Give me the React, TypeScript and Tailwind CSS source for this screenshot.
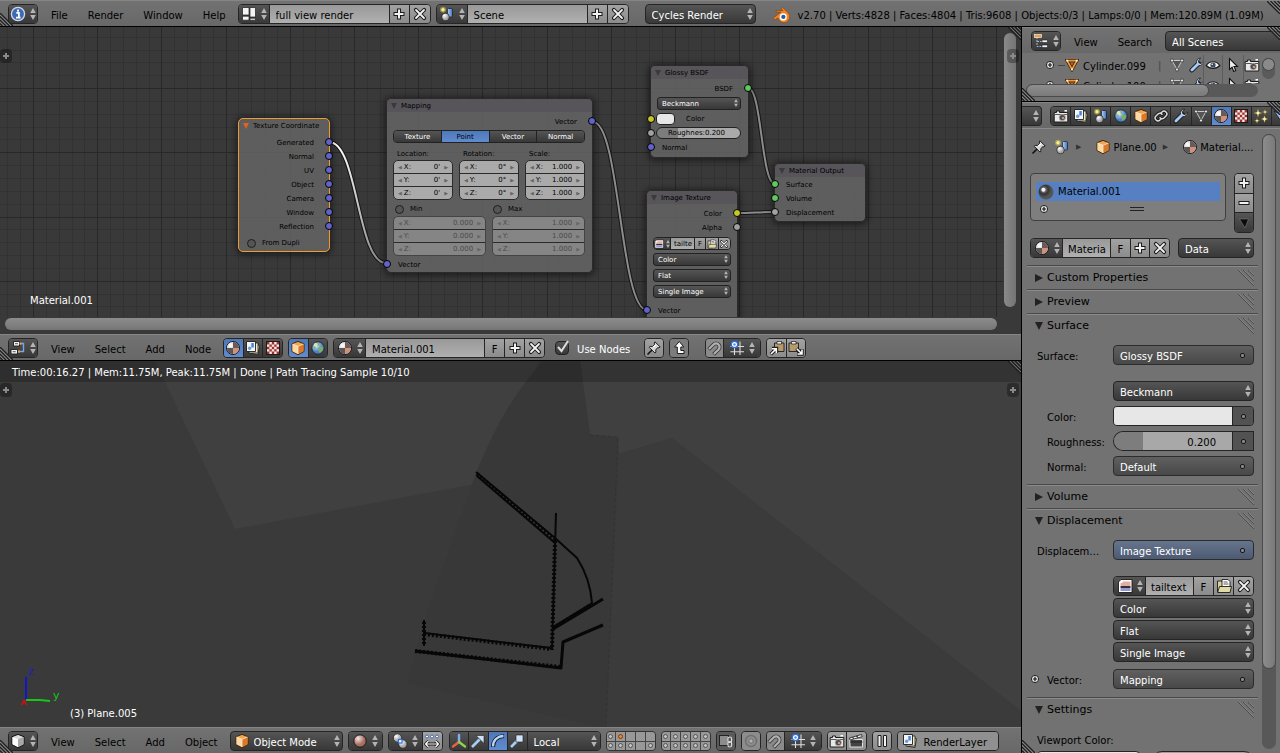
import type { ReactNode } from "react";
import clsx from "clsx";

const OUT = "#1c1c1c";

const icons: Record<string, ReactNode> = {
  info: (
    <>
      <circle cx="8" cy="8" r="6.6" fill="#3f6bb5" stroke="#cfd8e8" strokeWidth="1.3" />
      <path d="M6.3 6.8h2.6v4.6M6 11.6h4.6" stroke="#fff" strokeWidth="1.8" fill="none" />
      <rect x="7" y="3.6" width="2" height="2" fill="#fff" />
    </>
  ),
  layout: (
    <path d="M1.500 1.500h6.500v7.500h-6.500zM9 1.500h5.500v9.500H9zM1.500 10.200h6.500v4h-6.500zM9 12.200h5.500v2H9z" fill="#f4f4f4" stroke={OUT} strokeWidth=".7" />
  ),
  scene: (
    <>
      <rect x="8.500" y="2.500" width="5" height="8.500" rx="1" fill="url(#blue)" stroke={OUT} strokeWidth=".7" />
      <circle cx="4" cy="3.800" r="3" fill="#e8e04a" opacity=".45" />
      <circle cx="4" cy="3.800" r="1.700" fill="#f6f08a" />
      <circle cx="6.500" cy="11" r="3.800" fill="url(#ball)" stroke={OUT} strokeWidth=".7" />
    </>
  ),
  blender: (
    <>
      <path d="M1 10.800 8 5.400H3.600V4h6L8.300 2.400l1.300-1 5 4.800a5.300 5.300 0 1 1-9.300 4.400L2.500 12.300z" fill="#ee8324" stroke="#8a4310" strokeWidth=".6" />
      <circle cx="10" cy="9.700" r="3.200" fill="#fff" />
      <circle cx="10.100" cy="9.700" r="1.900" fill="#285a9c" />
    </>
  ),
  outliner: (
    <>
      <path d="M4 4v9.500h5M4 8.500h5" stroke="#9db8dc" fill="none" strokeDasharray="2 1" />
      <rect x="1.500" y="1.500" width="7" height="3" fill="#f0a040" stroke="#fff" strokeWidth=".6" />
      <path d="M9 7h5.500v2.600H9zM9 12h5.500v2.600H9z" fill="#f4f4f4" stroke={OUT} strokeWidth=".6" />
    </>
  ),
  plus: (
    <>
      <path d="M8 2.500v11M2.500 8h11" stroke={OUT} strokeWidth="4" />
      <path d="M8 3.500v9M3.500 8h9" stroke="#f2f2f2" strokeWidth="2" />
    </>
  ),
  minus: (
    <>
      <path d="M2.500 8h11" stroke={OUT} strokeWidth="4" />
      <path d="M3.500 8h9" stroke="#f2f2f2" strokeWidth="2" />
    </>
  ),
  cross: (
    <>
      <path d="m3.800 3.800 8.400 8.400M12.200 3.800l-8.400 8.400" stroke={OUT} strokeWidth="3.800" strokeLinecap="round" />
      <path d="m4 4 8 8M12 4l-8 8" stroke="#f2f2f2" strokeWidth="1.800" strokeLinecap="round" />
    </>
  ),
  down: <path d="M3.500 4h9L9 13z" fill="#0c0c0c" stroke="#888" strokeWidth=".5" />,
  expand: (
    <>
      <circle cx="8" cy="8" r="3.600" fill="#eee" stroke="#222" strokeWidth="1" />
      <path d="M8 5.800v4.400M5.800 8h4.400" stroke="#111" strokeWidth="1.200" />
    </>
  ),
  mesh: (
    <>
      <path d="M2.500 3h11L8 13z" fill="none" stroke="#3a2000" strokeWidth="3.600" />
      <path d="M2.500 3h11L8 13z" fill="none" stroke="#f59a3c" strokeWidth="2" />
      <path d="M1.500 2h2v2h-2zM12.500 2h2v2h-2zM7 12h2v2H7z" fill="#fff3d8" />
    </>
  ),
  meshdata: (
    <>
      <path d="M3 3.500h10L8 12.500z" fill="#555" stroke="#c8c8c8" strokeWidth="1" />
      <path d="M1.700 2.200h2.600v2.600H1.700zM11.700 2.200h2.600v2.600h-2.600zM6.700 11.200h2.600v2.600H6.700z" fill="#fff" stroke={OUT} strokeWidth=".6" />
    </>
  ),
  wrench: (
    <>
      <path d="M2.800 13.200 9.500 6.500" stroke={OUT} strokeWidth="4.600" strokeLinecap="round" />
      <path d="M14.600 4.300 12 6.600l-2.300-.7-.4-2.300L11.600 1a4.200 4.200 0 0 0-4 5.500l2 2a4.300 4.300 0 0 0 5-4.200z" fill="#c9defa" stroke={OUT} strokeWidth=".8" />
      <path d="M2.900 13.100 9 7" stroke="#a9ccf6" strokeWidth="2.800" strokeLinecap="round" />
    </>
  ),
  eye: (
    <>
      <path d="M1.200 8.500C4.500 3.500 11.500 3.500 14.800 8.500 11.500 12.200 4.500 12.200 1.200 8.500z" fill="#f1f1f1" stroke={OUT} strokeWidth="1.200" />
      <circle cx="8" cy="8" r="2.600" fill="#3c4c60" />
      <circle cx="7.200" cy="7.200" r=".8" fill="#fff" />
    </>
  ),
  cursor: <path d="M4.500 1.500v11l2.600-2.300 1.600 4.200 2-.9-1.700-4H12.500z" fill="#eee" stroke="#111" strokeWidth="1.100" />,
  camera: (
    <>
      <path d="M1.200 4.500h2.300V3h3v1.500h8.300V14H1.200z" fill="#e9e9e9" stroke={OUT} strokeWidth="1" />
      <path d="M2 6.500h12" stroke="#555" />
      <circle cx="9.300" cy="9.600" r="3.200" fill="#4b4b4b" stroke="#bbb" strokeWidth=".8" />
      <circle cx="10" cy="10" r="1.300" fill="#d88a78" />
      <rect x="11.500" y="2" width="2.500" height="1.600" fill="#fff" />
    </>
  ),
  layers: (
    <>
      <path d="m6 4 8.500 1.500L13 14.500l-8.500-1.500z" fill="#e6deb8" stroke={OUT} strokeWidth=".8" />
      <path d="M4 3h9v10H4z" fill="#efe8c6" stroke={OUT} strokeWidth=".8" />
      <path d="M1.500 1.500h9v10h-9z" fill="#f6f6f6" stroke={OUT} strokeWidth=".9" />
      <path d="M6.300 3h2.500v4.500H6.300z" fill="#4a86d8" />
      <circle cx="4.700" cy="8.300" r="1.700" fill="#6a9be0" />
    </>
  ),
  world: (
    <>
      <circle cx="8" cy="8" r="6.200" fill="url(#globe)" stroke={OUT} strokeWidth=".8" />
      <path d="M3 5.500 6.500 3l3 .8-1 2-2.500.8L5 9zM9.500 6.500l3.800.7-.8 3.600-3 2-1.500-3.300z" fill="#7fae62" />
      <circle cx="5.800" cy="5" r="2" fill="#fff" opacity=".65" />
    </>
  ),
  cube: (
    <>
      <path d="m8 1.400 6 2.300v7.800L8 14.700l-6-3.200V3.700z" fill="#f0a54e" stroke="#43270a" strokeWidth="1" />
      <path d="M2.500 4 8 6.300v7.800l-5.500-2.900z" fill="#fbd9a4" />
      <path d="M13.500 4 8 6.300v7.800l5.500-2.900z" fill="#d9792a" />
      <path d="M2.500 4 8 6.300 13.500 4M8 6.300V14" stroke="#fff0d8" strokeWidth=".7" fill="none" />
    </>
  ),
  viewcube: (
    <>
      <path d="m8 1.400 6 2.300v7.800L8 14.700l-6-3.200V3.700z" fill="#ddd" stroke="#111" strokeWidth="1" />
      <path d="M2.500 4 8 6.300v7.800l-5.500-2.900z" fill="#fff" />
      <path d="M13.500 4 8 6.300v7.800l5.500-2.900z" fill="#a8a8a8" />
    </>
  ),
  chain: (
    <g fill="none" strokeLinecap="round">
      <path d="M7 9.800a2.800 2.800 0 0 0 4 .2l2-2a2.800 2.800 0 0 0-4-4l-1 1M9 6.200A2.800 2.800 0 0 0 5 6L3 8a2.800 2.800 0 0 0 4 4l1-1" stroke={OUT} strokeWidth="3.400" />
      <path d="M7 9.800a2.800 2.800 0 0 0 4 .2l2-2a2.800 2.800 0 0 0-4-4l-1 1M9 6.200A2.800 2.800 0 0 0 5 6L3 8a2.800 2.800 0 0 0 4 4l1-1" stroke="#ddd" strokeWidth="1.500" />
    </g>
  ),
  material: (
    <>
      <circle cx="8" cy="8" r="6.500" fill="#b9b9b9" stroke="#191919" strokeWidth="1" />
      <path d="M8 8V2a6 6 0 0 1 6 6z" fill="#6a5a5a" />
      <path d="M8 8H2a6 6 0 0 1 6-6z" fill="#e0e0e0" />
      <path d="M8 8h6a6 6 0 0 1-6 6z" fill="#cf907c" />
      <path d="M8 8v6a6 6 0 0 1-6-6z" fill="#5e5555" />
      <circle cx="5.600" cy="5.400" r="2.200" fill="#fff" opacity=".7" />
    </>
  ),
  darkball: (
    <>
      <circle cx="8" cy="8" r="7.500" fill="url(#dark)" />
      <circle cx="5.400" cy="5.700" r="2" fill="#fff" opacity=".9" />
    </>
  ),
  solid: <circle cx="8" cy="8" r="6.200" fill="url(#rose)" stroke="#191919" strokeWidth="1" />,
  texture: (
    <>
      <rect x="1.500" y="1.500" width="13" height="13" fill="#f6ecec" stroke={OUT} strokeWidth="1" />
      <path d="M2 2h2.400v2.400H2zM6.800 2h2.400v2.400H6.800zM11.600 2H14v2.400h-2.400zM4.400 4.400h2.400v2.400H4.400zM9.200 4.400h2.400v2.400H9.200zM2 6.800h2.400v2.400H2zM6.800 6.800h2.400v2.400H6.800zM11.600 6.800H14v2.400h-2.400zM4.400 9.200h2.400v2.400H4.400zM9.200 9.200h2.400v2.400H9.200zM2 11.600h2.400V14H2zM6.800 11.600h2.400V14H6.800zM11.600 11.600H14V14h-2.400z" fill="#a0302a" />
    </>
  ),
  particles: (
    <path d="M5 .5 6 4l3.500 1L6 6 5 9.500 4 6 .5 5 4 4zM12 1l.7 2.300L15 4l-2.300.7L12 7l-.7-2.300L9 4l2.300-.7zM11.500 7.500l1 2.500 2.500 1-2.500 1-1 2.800-1-2.800-2.500-1 2.500-1zM4 10l.7 2 2 .7-2 .7-.7 2-.7-2-2-.7 2-.7z" fill="#fff3b0" stroke="#5a4a10" strokeWidth=".4" />
  ),
  physics: <path d="M1 3c4 3 8 2 13 1l-6 9z" fill="#9cc0f0" stroke={OUT} strokeWidth=".8" />,
  pin: (
    <>
      <path d="m1.500 14.500 4.800-4.800" stroke="#111" strokeWidth="1.600" />
      <path d="m9 1.800 5.200 5.200-1.500.8-1-.2-2 2.400.3 2.200-1 .9-5.800-5.800.9-1 2.300.3L8.700 4.400l-.4-1.300z" fill="#d6d6d6" stroke={OUT} strokeWidth="1" />
      <path d="m7.200 7.300 3-2.700" stroke="#fff" strokeWidth="1.200" />
    </>
  ),
  image: (
    <>
      <path d="M4 1.500h11v13H1.500V4z" fill="#fff" stroke={OUT} strokeWidth=".9" />
      <path d="M3.500 5h2V3.500h8V8h-10z" fill="#e2aea4" />
      <path d="M3.500 8h10v2h-10z" fill="#3a2a3a" />
      <path d="M3.500 10h10v3h-10z" fill="#9298d0" />
    </>
  ),
  folder: (
    <>
      <path d="M1.500 3h4l1 1.500h2V14h-7z" fill="#d8cf98" stroke={OUT} strokeWidth=".9" />
      <path d="M6 1.500h6l2 2V10H6z" fill="#fff" stroke={OUT} strokeWidth=".9" />
      <path d="M7.500 4h4M7.500 6h5" stroke="#444" strokeWidth=".9" />
      <path d="M3.500 8.500h12l-1.500 6H1.700z" fill="#e2daa6" stroke={OUT} strokeWidth=".9" />
    </>
  ),
  nodes: (
    <>
      <path d="M9 3.500h4.500v8H8" stroke="#79a6e8" strokeWidth="1.400" fill="none" />
      <path d="M3.500 1.500h6v4.500h-6zM1 9.500h6.500V14H1z" fill="#f2f2f2" stroke={OUT} strokeWidth=".9" />
      <path d="M5 3.700h3M2.700 11.700h3" stroke="#555" />
      <rect x="9.500" y="2.600" width="2" height="2" fill="#f0a030" />
      <rect x="8" y="10.600" width="2" height="2" fill="#f0a030" />
    </>
  ),
  up: <path d="M8.300 1.500 3.500 7h2.800v6.500H13v-3H9.800V7h3z" fill="#fff" stroke={OUT} strokeWidth="1" />,
  magnet: (
    <g fill="none" transform="rotate(45 8 8)">
      <path d="M4.500 13.500V6.500a3.500 3.500 0 0 1 7 0v7" stroke="#3a3a3a" strokeWidth="3.800" />
      <path d="M4.500 13V6.500a3.500 3.500 0 0 1 7 0V13" stroke="#b0b0b0" strokeWidth="2.200" />
    </g>
  ),
  snap: (
    <>
      <path d="M5.500 5v10M11 1.500V15M1.500 6.500H15M1.500 11.800H15" stroke="#ddd" strokeWidth="1.100" />
      <circle cx="5.500" cy="4.500" r="3.200" fill="#fff" stroke="#2f6fe0" strokeWidth="1.300" />
      <circle cx="5.500" cy="4.500" r="1.200" fill="#4a8cf8" />
    </>
  ),
  copy: (
    <>
      <path d="M5.500 3H15v8.500H5.500z" fill="#b59a6e" stroke={OUT} strokeWidth=".9" />
      <path d="M8 1.500h4.500V4H8z" fill="#eee" stroke={OUT} strokeWidth=".7" />
      <path d="m1.800 14.200 4.500-4.500M3 8.500h4.500V13" stroke={OUT} strokeWidth="3.400" fill="none" />
      <path d="m2 14 4.500-4.500M3 8.700h4.300V13" stroke="#fff" strokeWidth="1.600" fill="none" />
    </>
  ),
  paste: (
    <>
      <path d="M1 3h9.500v8.500H1z" fill="#b59a6e" stroke={OUT} strokeWidth=".9" />
      <path d="M3.500 1.500H8V4H3.500z" fill="#eee" stroke={OUT} strokeWidth=".7" />
      <path d="m8.500 8.500 5 5M14 9v5H9" stroke={OUT} strokeWidth="3.400" fill="none" />
      <path d="m8.800 8.800 5 5M14 9.500V14H9.500" stroke="#fff" strokeWidth="1.600" fill="none" />
    </>
  ),
  pivot: (
    <>
      <circle cx="5.500" cy="5" r="4.200" fill="url(#ball)" stroke={OUT} strokeWidth=".7" />
      <circle cx="10.800" cy="11" r="4.200" fill="url(#ball)" stroke={OUT} strokeWidth=".7" />
      <rect x="6.500" y="6.500" width="3.500" height="3.500" fill="#fff" stroke="#2f6fe0" strokeWidth="1.200" />
    </>
  ),
  spread: (
    <>
      <g fill="#fff" stroke="#3a66b0" strokeWidth="1">
        <circle cx="3" cy="3.500" r="1.500" />
        <circle cx="8" cy="3.500" r="1.500" />
        <circle cx="13" cy="3.500" r="1.500" />
      </g>
      <path d="M2 11h12M4.500 8 1.500 11l3 3M11.500 8l3 3-3 3" stroke={OUT} strokeWidth="3" fill="none" />
      <path d="M2 11h12M4.500 8 1.500 11l3 3M11.500 8l3 3-3 3" stroke="#fff" strokeWidth="1.200" fill="none" />
    </>
  ),
  axes: (
    <g strokeWidth="2.400" strokeLinecap="round">
      <path d="M8 9V2" stroke="#7fb0f4" />
      <path d="m8 9-6 4.500" stroke="#e8604a" />
      <path d="m8 9 6 4.500" stroke="#8cd44c" />
    </g>
  ),
  translate: (
    <>
      <path d="m2 14 8-8" stroke="#a8ccf6" strokeWidth="2.600" />
      <path d="M6 2.500h8v8z" fill="#cfe2fb" stroke={OUT} strokeWidth=".6" />
    </>
  ),
  rotate: (
    <>
      <path d="M3 14C3 7.500 7 3.500 14 3" stroke={OUT} strokeWidth="4.200" fill="none" />
      <path d="M3 13.500C3 7.500 7 3.500 13.500 3" stroke="#b6d4f8" strokeWidth="2.400" fill="none" />
    </>
  ),
  scale: (
    <>
      <path d="m2 14 7-7" stroke="#a8ccf6" strokeWidth="2.600" />
      <path d="M7 2h7v7H7z" fill="#cfe2fb" stroke={OUT} strokeWidth=".6" />
    </>
  ),
  lock: (
    <>
      <rect x="1.500" y="2.500" width="9" height="10" fill="#8c8c8c" stroke="#222" />
      <rect x="10" y="4" width="3.600" height="5.500" rx="1.800" fill="none" stroke="#ddd" strokeWidth="1.200" />
      <rect x="10" y="8.500" width="3.600" height="5.500" rx="1.800" fill="none" stroke="#ddd" strokeWidth="1.200" />
    </>
  ),
  ring: (
    <>
      <circle cx="8" cy="8" r="5.500" fill="none" stroke="#6e6e6e" strokeWidth="1.400" />
      <circle cx="8" cy="8" r="2.200" fill="#b4b4b4" stroke="#6e6e6e" strokeWidth="1" />
    </>
  ),
  clapper: (
    <>
      <path d="M2 6.500h12.500V14H2z" fill="#444" stroke="#eee" strokeWidth=".9" />
      <path d="m1.500 5 12-3.500.7 2.200L2.200 7z" fill="#eee" stroke={OUT} strokeWidth=".8" />
      <path d="m4.500 4.300 1.300 1.400M8.500 3l1.300 1.400M2 9h12.500" stroke="#222" strokeWidth="1.200" />
    </>
  ),
  pause: <path d="M4 2.500h3v11H4zM9.500 2.500h3v11h-3z" fill="#f2f2f2" stroke={OUT} strokeWidth="1" />,
};

function Icon({ name, className = "size-4" }: { name: string; className?: string }) {
  return (
    <svg viewBox="0 0 16 16" className={clsx("shrink-0", className)} aria-hidden="true">
      {icons[name]}
    </svg>
  );
}

function Arrows({ className = "h-3 w-1.5" }: { className?: string }) {
  return (
    <svg viewBox="0 0 6 12" className={clsx("shrink-0", className)} aria-hidden="true">
      <path d="M3 0l2.800 5H.2zM3 12l2.800-5H.2z" fill="#b4b4b4" />
    </svg>
  );
}

// Diagonal grip drawn in the corners of every editor area
function Grip({ className }: { className: string }) {
  return (
    <svg viewBox="0 0 13 13" className={clsx("pointer-events-none absolute size-[13px]", className)} aria-hidden="true">
      <path d="M0 0l13 13M3.500 0l9.500 9.500M7 0l6 6M10.500 0l2.500 2.500" stroke="#202020" strokeWidth="1.300" />
      <path d="M1.800 0l11.200 11.200M5.300 0l7.700 7.700M8.800 0l4.200 4.200" stroke="#8e8e8e" strokeWidth=".8" />
    </svg>
  );
}

const dark = "bg-linear-to-b from-[#555555] to-[#383838]";
const tool = "bg-linear-to-b from-[#a2a2a2] to-[#8c8c8c]";
const field = "bg-linear-to-b from-[#999999] to-[#b0b0b0]";
const blue = "bg-linear-to-b from-[#4f78b8] to-[#5f8bd0]";

function Group({ className, children }: { className?: string; children: ReactNode }) {
  return (
    <div className={clsx("flex h-5 shrink-0 divide-x divide-[#252525] overflow-hidden rounded border border-[#252525]", className)}>
      {children}
    </div>
  );
}

function Tool({ icon, label, className = tool }: { icon: string; label: string; className?: string }) {
  return (
    <button aria-label={label} className={clsx("flex flex-1 items-center justify-center", className)}>
      <Icon name={icon} />
    </button>
  );
}

function IconMenu({ icon, label, className }: { icon: string; label: string; className?: string }) {
  return (
    <button aria-label={label} className={clsx("flex items-center justify-center gap-1", dark, className)}>
      <Icon name={icon} />
      <Arrows />
    </button>
  );
}

function Select({ value, label, className, icon }: { value: string; label?: string; className?: string; icon?: string }) {
  return (
    <div className={clsx("relative h-5", className)}>
      {icon && <Icon name={icon} className="absolute left-1 top-0.5 size-4" />}
      <select
        aria-label={label ?? value}
        className={clsx("block size-full appearance-none rounded border border-[#252525] pr-3 pt-0.5 text-white", dark, icon ? "pl-[23px]" : "pl-1.5")}
      >
        <option>{value}</option>
      </select>
      <Arrows className="absolute right-[3px] top-1 h-3 w-1.5" />
    </div>
  );
}

function EditorHeader({ children, className }: { children: ReactNode; className?: string }) {
  return (
    <header
      className={clsx(
        "relative flex h-[26px] shrink-0 items-start overflow-hidden whitespace-nowrap border-t border-[#858585] bg-linear-to-b from-[#727272] to-[#686868] pt-[3px]",
        className,
      )}
    >
      {children}
    </header>
  );
}

function Menus({ items }: { items: string[] }) {
  return (
    <nav className="ml-[13px] mr-3 flex h-5 shrink-0 items-center gap-5 pt-0.5">
      {items.map((item) => (
        <button key={item}>{item}</button>
      ))}
    </nav>
  );
}

function TopBar() {
  return (
    <EditorHeader>
      <Group className="ml-2 w-[30px]">
        <IconMenu icon="info" label="Editor type" className="flex-1" />
      </Group>
      <Menus items={["File", "Render", "Window", "Help"]} />
      <Group>
        <IconMenu icon="layout" label="Screen layout" className="w-[31px]" />
        <input aria-label="Screen" defaultValue="full view render" className={clsx("w-[120px] px-1.5 pt-0.5", field)} />
        <Tool icon="plus" label="Add screen" className={clsx("w-5", tool)} />
        <Tool icon="cross" label="Delete screen" className={clsx("w-5", tool)} />
      </Group>
      <Group className="ml-[5px]">
        <IconMenu icon="scene" label="Browse scene" className="w-[31px]" />
        <input aria-label="Scene" defaultValue="Scene" className={clsx("w-[120px] px-1.5 pt-0.5", field)} />
        <Tool icon="plus" label="Add scene" className={clsx("w-5", tool)} />
        <Tool icon="cross" label="Delete scene" className={clsx("w-5", tool)} />
      </Group>
      <Select value="Cycles Render" label="Render engine" className="ml-4 w-[111px] shrink-0" />
      <Icon name="blender" className="ml-4 mt-0.5 size-[18px]" />
      <p className="ml-2 pt-0.5 leading-5">
        v2.70 | Verts:4828 | Faces:4804 | Tris:9608 | Objects:0/3 | Lamps:0/0 | Mem:120.89M (1.09M)
      </p>
      <Grip className="bottom-0 left-0 rotate-180" />
      <Grip className="right-0 top-0" />
    </EditorHeader>
  );
}

const socketColors = {
  vector: "bg-[#6363c7]",
  shader: "bg-[#63c763]",
  color: "bg-[#c7c729]",
  value: "bg-[#a1a1a1]",
};

interface SocketProps {
  label?: string;
  type: keyof typeof socketColors;
  side?: "in" | "out";
  children?: ReactNode;
}

function Socket({ label, type, side = "in", children }: SocketProps) {
  return (
    <div className={clsx("relative flex h-3.5 items-center", side === "out" ? "justify-end px-[15px]" : "px-[11px]")}>
      <span
        className={clsx(
          "absolute top-[3px] size-2 rounded-full border border-black",
          socketColors[type],
          side === "in" ? "-left-1" : "-right-1",
        )}
      />
      {children ?? <span className="pt-0.5">{label}</span>}
    </div>
  );
}

interface NodeProps {
  title: string;
  className: string;
  selected?: boolean;
  children: ReactNode;
}

function Node({ title, className, selected, children }: NodeProps) {
  return (
    <article
      className={clsx(
        "absolute rounded-[5px] border bg-[#686868]/80 text-[7px] leading-3 text-black shadow-[0_1px_6px_2px_rgba(0,0,0,0.45)]",
        selected ? "border-[#f19a2f]" : "border-[#2a2a2a]",
        className,
      )}
    >
      <h3 className={clsx("flex h-[13px] items-center gap-1 rounded-t pl-1 pt-px", !selected && "bg-[#544f58]/60")}>
        <svg viewBox="0 0 6 6" className="size-1.5">
          <path d="M0 0h6L3 6z" fill={selected ? "#e0641a" : "#3a3a3a"} />
        </svg>
        {title}
      </h3>
      {children}
    </article>
  );
}

function NodeSelect({ value, className }: { value: string; className?: string }) {
  return (
    <div className={clsx("relative h-[13px]", className)}>
      <select aria-label={value} className={clsx("block size-full appearance-none rounded-[3px] border border-[#222] pl-1 text-white", dark)}>
        <option>{value}</option>
      </select>
      <Arrows className="absolute right-[3px] top-[2px] h-2 w-1" />
    </div>
  );
}

function VectorFields({ name, value, disabled }: { name: string; value: string; disabled?: boolean }) {
  return (
    <div
      className={clsx(
        "min-w-0 flex-1 divide-y divide-[#2a2a2a] overflow-hidden rounded-[5px] border",
        disabled ? "border-[#444] bg-[#858585] text-[#4a4a4a]" : "border-[#2a2a2a] bg-[#aaaaaa]",
      )}
    >
      {["X:", "Y:", "Z:"].map((axis) => (
        <label key={axis} className="flex h-[13px] items-center gap-0.5 px-1 last:h-3">
          <span className="text-[5px] text-[#666]">◀</span>
          {axis}
          <input
            aria-label={`${name} ${axis}`}
            disabled={disabled}
            defaultValue={value}
            className="w-0 min-w-0 flex-1 bg-transparent pr-0.5 text-right"
          />
          <span className="text-[5px] text-[#666]">▶</span>
        </label>
      ))}
    </div>
  );
}

function Check({ label }: { label: string }) {
  return (
    <label className="flex flex-1 items-center gap-1.5">
      <input type="checkbox" className="size-[9px] appearance-none rounded-full border border-[#1e1e1e] bg-[#555]" />
      {label}
    </label>
  );
}

function GridLines() {
  const step = 12.84;
  const lines = Array.from({ length: 200 }, (_, i) => i);
  const at = (start: number, i: number) => Math.floor(start + i * step) + 0.5;
  const draw = (major: boolean) =>
    lines
      .map((i) => {
        const x = i % 5 === 2 ? major : !major;
        const y = i % 5 === 0 ? major : !major;
        return `${x ? `M${at(7.8, i)} 0V3000` : ""}${y ? `M0 ${at(-2.6, i)}H3000` : ""}`;
      })
      .join("");
  return (
    <>
      <path d={draw(false)} stroke="#323232" />
      <path d={draw(true)} stroke="#282828" />
    </>
  );
}

const links = [
  { d: "M329 115C358 115 357 236 386 236", stroke: "url(#link)" },
  { d: "M593 95C620 95 620 283 647 283", stroke: "#8c8c8c" },
  { d: "M748 61C762 61 761 157 775 157", stroke: "#8c8c8c" },
  { d: "M737 186C750 186 762 185 775 185", stroke: "#8c8c8c" },
];

function NodeCanvas() {
  return (
    <div className="relative min-h-0 min-w-0 flex-1 overflow-hidden">
      <svg className="absolute inset-0 size-full" aria-hidden="true">
        <GridLines />
        {links.map((link) => (
          <g key={link.d} fill="none">
            <path d={link.d} stroke="#141414" strokeWidth="4" />
            <path d={link.d} stroke={link.stroke} strokeWidth="2" />
          </g>
        ))}
      </svg>

      <Node title="Texture Coordinate" selected className="left-[238px] top-[91px] h-[134px] w-[92px]">
        <div className="mt-[3px]">
          {["Generated", "Normal", "UV", "Object", "Camera", "Window", "Reflection"].map((out) => (
            <Socket key={out} label={out} type="vector" side="out" />
          ))}
        </div>
        <div className="mt-1 flex px-2">
          <Check label="From Dupli" />
        </div>
      </Node>

      <Node title="Mapping" className="left-[386px] top-[71px] h-[175px] w-[207px]">
        <div className="mt-0.5">
          <Socket label="Vector" type="vector" side="out" />
        </div>
        <div className="pl-1.5 pr-[7px]">
          <div className="mt-0.5 flex h-[13px] divide-x divide-[#222] overflow-hidden rounded border border-[#222] text-white">
            {["Texture", "Point", "Vector", "Normal"].map((kind) => (
              <button key={kind} className={clsx("flex flex-1 items-center justify-center", kind === "Point" ? clsx(blue, "text-black") : dark)}>
                {kind}
              </button>
            ))}
          </div>
          <div className="mt-1 flex h-[13px] items-center gap-1.5">
            {["Location:", "Rotation:", "Scale:"].map((name) => (
              <span key={name} className="flex-1 pl-1">
                {name}
              </span>
            ))}
          </div>
          <div className="flex gap-1.5">
            <VectorFields name="Location" value="0'" />
            <VectorFields name="Rotation" value="0°" />
            <VectorFields name="Scale" value="1.000" />
          </div>
          <div className="mt-0.5 flex h-3.5 gap-1.5 pl-0.5">
            <Check label="Min" />
            <Check label="Max" />
          </div>
          <div className="flex gap-1.5">
            <VectorFields name="Min" value="0.000" disabled />
            <VectorFields name="Max" value="1.000" disabled />
          </div>
        </div>
        <div className="mt-px">
          <Socket label="Vector" type="vector" />
        </div>
      </Node>

      <Node title="Glossy BSDF" className="left-[650px] top-[38px] h-[93px] w-[99px]">
        <div className="mt-0.5">
          <Socket label="BSDF" type="shader" side="out" />
        </div>
        <NodeSelect value="Beckmann" className="ml-1.5 mr-[7px] mt-0.5" />
        <div className="mt-0.5">
          <Socket type="color">
            <button aria-label="Color" className="-ml-1.5 mr-[11px] h-3 w-[19px] rounded border border-[#222] bg-[#e7e7e7]" />
            Color
          </Socket>
          <Socket type="value">
            <label className="-ml-1.5 -mr-1 flex h-3 flex-1 items-center justify-center rounded-full border border-[#222] bg-linear-to-r from-[#7c7c7c] from-25% to-[#aaaaaa] to-25%">
              Roughnes:
              <input aria-label="Roughness" defaultValue="0.200" className="w-6 bg-transparent" />
            </label>
          </Socket>
          <Socket label="Normal" type="vector" />
        </div>
      </Node>

      <Node title="Image Texture" className="left-[646px] top-[163px] h-[140px] w-[92px]">
        <div className="mt-0.5">
          <Socket label="Color" type="color" side="out" />
          <Socket label="Alpha" type="value" side="out" />
        </div>
        <div className="mx-1.5 mt-[3px] flex h-[13px] divide-x divide-[#222] overflow-hidden rounded border border-[#222]">
          <button aria-label="Browse image" className={clsx("flex w-[17px] items-center justify-center gap-0.5", dark)}>
            <Icon name="image" className="size-2.5" />
            <Arrows className="h-2 w-1" />
          </button>
          <input aria-label="Image" defaultValue="tailte" className={clsx("w-6 pl-[3px]", field)} />
          <button className={clsx("w-[11px]", tool)}>F</button>
          <button aria-label="Open image" className={clsx("flex flex-1 items-center justify-center", tool)}>
            <Icon name="folder" className="size-2.5" />
          </button>
          <button aria-label="Unlink image" className={clsx("flex flex-1 items-center justify-center", tool)}>
            <Icon name="cross" className="size-2.5" />
          </button>
        </div>
        <NodeSelect value="Color" className="mx-1.5 mt-[3px]" />
        <NodeSelect value="Flat" className="mx-1.5 mt-[3px]" />
        <NodeSelect value="Single Image" className="mx-1.5 mt-[3px]" />
        <div className="mt-[5px]">
          <Socket label="Vector" type="vector" />
        </div>
      </Node>

      <Node title="Material Output" className="left-[774px] top-[136px] h-[59px] w-[92px]">
        <Socket label="Surface" type="shader" />
        <Socket label="Volume" type="shader" />
        <Socket label="Displacement" type="value" />
      </Node>

      <p className="absolute bottom-2 left-[30px] leading-4 text-white">Material.001</p>
      <RegionTab className="left-0" />
    </div>
  );
}

function RegionTab({ className }: { className: string }) {
  return (
    <button aria-label="Show region" className={clsx("absolute top-[22px] flex h-3.5 w-3 items-center justify-center rounded bg-black/30", className)}>
      <svg viewBox="0 0 6 6" className="size-1.5">
        <path d="M3 0v6M0 3h6" stroke="#8a8a8a" strokeWidth="2" />
      </svg>
    </button>
  );
}

function NodeEditor() {
  return (
    <section className="flex min-h-0 flex-[333] flex-col bg-[#393939]">
      <div className="relative flex min-h-0 flex-1 flex-col">
        <div className="flex min-h-0 flex-1">
          <NodeCanvas />
          <div className="w-[18px] pb-2.5 pl-px pt-1.5">
            <div className="h-full w-3 rounded-full bg-linear-to-r from-[#8a8a8a] to-[#747474]" />
          </div>
        </div>
        <div className="h-[17px] pl-[5px] pr-6 pt-px">
          <div className="h-3 rounded-full bg-linear-to-b from-[#8c8c8c] to-[#767676]" />
        </div>
        <RegionTab className="right-0.5" />
        <Grip className="right-0 top-0" />
      </div>
      <EditorHeader>
        <Group className="ml-2 w-[30px]">
          <IconMenu icon="nodes" label="Editor type" className="flex-1" />
        </Group>
        <Menus items={["View", "Select", "Add", "Node"]} />
        <Group className="w-[60px]">
          <Tool icon="material" label="Shader nodes" className={blue} />
          <Tool icon="layers" label="Compositing nodes" className={dark} />
          <Tool icon="texture" label="Texture nodes" className={dark} />
        </Group>
        <Group className="ml-[5px] w-10">
          <Tool icon="cube" label="Object shader" className={blue} />
          <Tool icon="world" label="World shader" className={dark} />
        </Group>
        <Group className="ml-[5px] w-[212px]">
          <IconMenu icon="material" label="Browse material" className="w-8" />
          <input aria-label="Material" defaultValue="Material.001" className={clsx("w-[119px] px-1.5 pt-0.5", field)} />
          <button className={clsx("flex-1 pt-0.5", tool)}>F</button>
          <Tool icon="plus" label="New material" />
          <Tool icon="cross" label="Unlink material" />
        </Group>
        <label className="ml-2.5 flex h-5 items-center gap-2 text-white">
          <span className="relative flex">
            <input type="checkbox" defaultChecked className={clsx("peer size-3.5 appearance-none rounded border border-[#222]", dark)} />
            <svg viewBox="0 0 14 14" className="pointer-events-none absolute inset-0 hidden size-3.5 overflow-visible peer-checked:block">
              <path d="M3 6l3.500 4L13 0" stroke="#ddd" strokeWidth="2" fill="none" />
            </svg>
          </span>
          <span className="pt-0.5">Use Nodes</span>
        </label>
        <Group className="ml-3.5 w-5">
          <Tool icon="pin" label="Pin" />
        </Group>
        <Group className="ml-[5px] w-5">
          <Tool icon="up" label="Go to parent" className="bg-[#7c7c7c]" />
        </Group>
        <Group className="ml-4 w-14">
          <Tool icon="magnet" label="Snap" className="bg-[#8a8a8a]" />
          <IconMenu icon="snap" label="Snap element" className="w-9" />
        </Group>
        <Group className="ml-[5px] w-10">
          <Tool icon="copy" label="Copy nodes" />
          <Tool icon="paste" label="Paste nodes" />
        </Group>
        <Grip className="bottom-0 left-0 rotate-180" />
      </EditorHeader>
    </section>
  );
}

function RenderedScene() {
  return (
    <svg viewBox="0 361 1021 366" preserveAspectRatio="xMidYMid slice" className="absolute inset-0 size-full" aria-hidden="true">
      <rect y="361" width="1021" height="366" fill="#3a3a3a" />
      <path d="M155 361 235 529 475 484 540 361z" fill="#404040" />
      <path d="M580 361 590 435 618 437 619 454 672 438 1021 711V361z" fill="#404040" />
      <path d="M544 361Q505 400 476 473L424 622 407 683 600 727H606L618 437 590 435 580 361z" fill="#383838" />
      <path d="M619 454 672 438 1021 711V727H606z" fill="#3b3b3b" />
      <path d="M590 435 618 437 606 727" stroke="#323232" strokeWidth="1" strokeDasharray="3 3" fill="none" />
      <g stroke="#070707" fill="none" strokeLinejoin="round">
        <g strokeWidth="2">
          <path d="M476 472 555 538 577 558Q590 578 592 603L553 627" />
          <path d="M477 476 555 543" />
          <path d="M556 513 552 650" />
          <path d="M424 620V646M424 633 551 648" />
          <path d="M415 651 561 668 563 642 603 625" strokeWidth="3" />
          <path d="M553 629 603 599" strokeWidth="3" />
        </g>
        <g strokeWidth="4" strokeDasharray="2 2">
          <path d="M477 474 555 541M555 541 552 650M424 634 551 649M415 651 561 667M553 628 590 606M424 622V646" />
        </g>
      </g>
    </svg>
  );
}

function LayerGrid({ first }: { first?: boolean }) {
  return (
    <div className="ml-[5px] grid h-5 w-[50px] shrink-0 grid-cols-5 gap-px overflow-hidden rounded border border-[#333] bg-[#444]">
      {Array.from({ length: 10 }, (_, i) => {
        const empty = first && [2, 3, 4, 8].includes(i);
        return (
          <button key={i} aria-label={`Layer ${i + 1}`} className="flex items-center justify-center bg-[#989898]">
            {!empty && (
              <span className={clsx("size-[5px] rounded-full border", first && i === 1 ? "border-[#7a3c08] bg-[#f08a24]" : "border-[#555] bg-[#c4c4c4]")} />
            )}
          </button>
        );
      })}
    </div>
  );
}

function Viewport() {
  return (
    <section className="flex min-h-0 flex-[392] flex-col">
      <div className="relative min-h-0 flex-1 overflow-hidden">
        <RenderedScene />
        <p className="relative h-[21px] bg-black/20 pl-3 leading-6 text-white">
          Time:00:16.27 | Mem:11.75M, Peak:11.75M | Done | Path Tracing Sample 10/10
        </p>
        <RegionTab className="left-0" />
        <RegionTab className="right-0.5" />
        <Grip className="right-0 top-0" />
        <svg viewBox="0 0 50 50" className="absolute bottom-[19px] left-[18px] size-[50px]" aria-hidden="true">
          <path d="M8 42V19" stroke="#1414d0" strokeWidth="2" />
          <path d="M8 42h14l10 1" stroke="#14c814" strokeWidth="2" fill="none" />
          <path d="m8 42-5 5M5 42l4 5" stroke="#c81414" strokeWidth="1.500" />
          <text x="10" y="17" fontSize="11" fill="#1c1cd0">z</text>
          <text x="35" y="41" fontSize="11" fill="#14c814">y</text>
        </svg>
        <p className="absolute bottom-[5px] left-[70px] leading-4 text-white">(3) Plane.005</p>
      </div>
      <EditorHeader>
        <Group className="ml-2 w-[30px]">
          <IconMenu icon="viewcube" label="Editor type" className="flex-1" />
        </Group>
        <Menus items={["View", "Select", "Add", "Object"]} />
        <Select value="Object Mode" icon="cube" className="w-[113px] shrink-0" />
        <Group className="ml-[5px] w-[35px]">
          <IconMenu icon="solid" label="Shading" className="flex-1" />
        </Group>
        <Group className="ml-[5px] w-[55px]">
          <IconMenu icon="pivot" label="Pivot point" className="w-[34px]" />
          <Tool icon="spread" label="Manipulate centers" />
        </Group>
        <Group className="ml-1.5 w-[152px]">
          <Tool icon="axes" label="Manipulator" className={dark} />
          <Tool icon="translate" label="Translate" className={dark} />
          <Tool icon="rotate" label="Rotate" className={blue} />
          <Tool icon="scale" label="Scale" className={dark} />
          <button className={clsx("flex w-[72px] items-center justify-between pl-1.5 pr-[3px] text-white", dark)}>
            <span className="pt-0.5">Local</span>
            <Arrows />
          </button>
        </Group>
        <LayerGrid first />
        <LayerGrid />
        <Group className="ml-[5px] w-5">
          <Tool icon="lock" label="Lock camera" className="bg-[#5a5a5a]" />
        </Group>
        <Group className="ml-[5px] w-5">
          <Tool icon="ring" label="Proportional editing" className="bg-[#8c8c8c]" />
        </Group>
        <Group className="ml-[5px] w-14">
          <Tool icon="magnet" label="Snap" className="bg-[#8a8a8a]" />
          <IconMenu icon="snap" label="Snap element" className="w-9" />
        </Group>
        <Group className="ml-[5px] w-10">
          <Tool icon="camera" label="Render still" />
          <Tool icon="clapper" label="Render animation" />
        </Group>
        <Group className="ml-[5px] w-5">
          <Tool icon="pause" label="Pause render" />
        </Group>
        <Group className="ml-[5px] w-[102px]">
          <button className="flex flex-1 items-center gap-1.5 bg-[#909090] pl-1">
            <Icon name="layers" />
            <span className="pt-0.5">RenderLayer</span>
          </button>
        </Group>
        <Grip className="bottom-0 left-0 rotate-180" />
      </EditorHeader>
    </section>
  );
}

function OutlinerRow({ name }: { name: string }) {
  return (
    <li className="flex h-5 shrink-0 items-center pl-5">
      <Icon name="expand" />
      <span className="h-px w-[7px] bg-[#444]" />
      <Icon name="mesh" className="size-[14px]" />
      <span className="ml-1 w-[75px] pt-0.5">{name}</span>
      <span className="mr-2 text-[#444]">|</span>
      <Icon name="meshdata" />
      <Icon name="wrench" className="-mr-0.5 ml-1 size-4" />
      <span className="h-full w-px bg-[#5c5c5c]" />
      <Icon name="eye" className="mx-px size-4" />
      <span className="h-full w-px bg-[#5c5c5c]" />
      <Icon name="cursor" className="mx-0.5 size-4" />
      <span className="h-full w-px bg-[#5c5c5c]" />
      <Icon name="camera" className="size-4" />
    </li>
  );
}

function Outliner() {
  return (
    <section className="relative flex h-[74px] shrink-0 flex-col bg-[#727272]">
      <EditorHeader>
        <Group className="ml-[9px] w-[30px]">
          <IconMenu icon="outliner" label="Editor type" className="flex-1" />
        </Group>
        <Menus items={["View", "Search"]} />
        <Select value="All Scenes" className="ml-px w-32 shrink-0" />
      </EditorHeader>
      <div className="flex h-[31px] shrink-0 overflow-hidden">
        <ul className="relative flex flex-1 flex-col overflow-hidden pt-0.5">
          <OutlinerRow name="Cylinder.099" />
          <OutlinerRow name="Cylinder.100" />
        </ul>
        <div className="w-[18px] pt-[5px]">
          <div className="h-[21px] w-[13px] rounded-full bg-[#5a5a5a]">
            <div className="size-[13px] rounded-full border border-[#444] bg-[#8a8a8a]" />
          </div>
        </div>
      </div>
      <div className="ml-1 mr-[22px] h-[13px] shrink-0 rounded-full bg-[#595959]">
        <div className="h-full w-[79%] rounded-full border border-[#4a4a4a] bg-linear-to-b from-[#8e8e8e] to-[#7a7a7a]" />
      </div>
      <Grip className="right-0 top-0" />
      <Grip className="bottom-0 left-0 rotate-180" />
    </section>
  );
}

function Panel({ title, open, children }: { title: string; open?: boolean; children?: ReactNode }) {
  return (
    <section className="border-t border-[#4a4a4a]">
      <h2 className="flex h-[23px] items-center gap-1 border-t border-[#8a8a8a] pl-2 text-[11px]">
        <svg viewBox="0 0 8 8" className="size-2">
          <path d={open ? "M0 0h8L4 8z" : "M0 0l8 4-8 4z"} fill="#222" />
        </svg>
        <button className="pt-px">{title}</button>
        <svg viewBox="0 0 16 16" className="ml-auto mr-1 size-4" aria-hidden="true">
          <path d="M0 0l16 16M5 0l11 11M10 0l6 6" stroke="#4c4c4c" />
          <path d="M1 0l15 15M6 0l10 10M11 0l5 5" stroke="#8c8c8c" strokeWidth=".7" />
        </svg>
      </h2>
      {children}
    </section>
  );
}

function Dot() {
  return <span className="size-[5px] rounded-[2px] border border-[#161616] bg-[#888]" />;
}

function Row({ label, indent, className, children }: { label?: string; indent?: boolean; className?: string; children: ReactNode }) {
  return (
    <div className={clsx("flex h-5 items-center pr-1", className)}>
      <span className={clsx("w-[86px] shrink-0 truncate pt-0.5", indent ? "pl-5" : "pl-2.5 pr-3")}>{label}</span>
      {children}
    </div>
  );
}

function LinkButton({ value, active }: { value: string; active?: boolean }) {
  return (
    <button
      className={clsx(
        "flex h-5 flex-1 items-center justify-between rounded border border-[#2c2c2c] pl-1.5 pr-2 text-white",
        active ? "bg-linear-to-b from-[#66748c] to-[#4c5a73]" : "bg-linear-to-b from-[#606060] to-[#484848]",
      )}
    >
      <span className="pt-0.5">{value}</span>
      <Dot />
    </button>
  );
}

const tabs = ["camera", "layers", "scene", "world", "cube", "chain", "wrench", "meshdata", "material", "texture", "particles", "physics"];

function Properties() {
  return (
    <section className="relative flex min-h-0 flex-1 flex-col overflow-hidden bg-[#727272]">
      <EditorHeader>
        <button aria-label="Editor type" className={clsx("flex h-5 w-5 shrink-0 items-center justify-end rounded-r border border-l-0 border-[#252525] pr-0.5", dark)}>
          <Arrows />
        </button>
        <Group className="ml-2 w-[242px]">
          {tabs.map((tab) => (
            <Tool key={tab} icon={tab} label={tab} className={tab === "material" ? blue : dark} />
          ))}
        </Group>
      </EditorHeader>
      <div className="flex min-h-0 flex-1 border-t border-[#8a8a8a]">
        <div className="min-w-0 flex-1 overflow-hidden pl-[5px] pr-1">
          <div className="flex h-9 items-center pl-1">
            <Icon name="pin" />
            <Icon name="scene" className="ml-[7px] size-4" />
            <span className="ml-1.5 text-[7px] text-[#333]">▶</span>
            <Icon name="cube" className="ml-3.5 size-4" />
            <span className="ml-0.5">Plane.00</span>
            <span className="ml-1.5 text-[7px] text-[#333]">▶</span>
            <Icon name="material" className="ml-3.5 size-4" />
            <span className="ml-0.5 whitespace-nowrap">Material....</span>
          </div>
          <div className="mt-2 flex items-start gap-2 pl-[3px] pr-1">
            <div className="h-12 flex-1 rounded border border-[#404040] bg-[#7e7e7e] px-[5px] pt-2">
              <button className="flex h-[19px] w-full items-center gap-1 bg-[#5680c2] pl-0.5">
                <Icon name="darkball" />
                Material.001
              </button>
              <div className="flex h-4 items-center">
                <Icon name="expand" />
                <span className="ml-[78px] h-1 w-3.5 border-y border-[#222]" />
              </div>
            </div>
            <div className="flex h-[60px] w-5 flex-col divide-y divide-[#252525] overflow-hidden rounded border border-[#252525]">
              <Tool icon="plus" label="Add slot" />
              <Tool icon="minus" label="Remove slot" />
              <Tool icon="down" label="Slot specials" className={dark} />
            </div>
          </div>
          <div className="mb-[7px] mt-[5px] flex pl-[3px] pr-1">
            <Group className="w-[140px]">
              <IconMenu icon="material" label="Browse material" className="w-8" />
              <input aria-label="Material name" defaultValue="Materia" className={clsx("w-12 pl-[5px] pt-0.5", field)} />
              <button className={clsx("flex-1 pt-0.5", tool)}>F</button>
              <Tool icon="plus" label="New material" />
              <Tool icon="cross" label="Unlink material" />
            </Group>
            <Select value="Data" className="ml-2 flex-1" />
          </div>

          <Panel title="Custom Properties" />
          <Panel title="Preview" />
          <Panel title="Surface" open>
            <Row label="Surface:" className="mt-2">
              <LinkButton value="Glossy BSDF" />
            </Row>
            <Row className="mt-4">
              <Select value="Beckmann" className="flex-1" />
            </Row>
            <Row label="Color:" indent className="mt-[5px]">
              <Group className="flex-1">
                <button aria-label="Color" className="flex-1 bg-[#e7e7e7]" />
                <button aria-label="Link color" className="flex w-5 items-center justify-center bg-[#525252]">
                  <Dot />
                </button>
              </Group>
            </Row>
            <Row label="Roughness:" indent className="mt-[5px]">
              <Group className="flex-1 rounded-l-full">
                <input
                  aria-label="Roughness"
                  defaultValue="0.200"
                  className="min-w-0 flex-1 bg-linear-to-r from-[#7d7d7d] from-25% to-[#a8a8a8] to-25% pr-4 pt-0.5 text-right"
                />
                <button aria-label="Link roughness" className="flex w-5 items-center justify-center bg-[#525252]">
                  <Dot />
                </button>
              </Group>
            </Row>
            <Row label="Normal:" indent className="mb-2 mt-[5px]">
              <LinkButton value="Default" />
            </Row>
          </Panel>
          <Panel title="Volume" />
          <Panel title="Displacement" open>
            <Row label="Displacement:" className="mt-2">
              <LinkButton value="Image Texture" active />
            </Row>
            <Row className="mt-4">
              <Group className="flex-1">
                <IconMenu icon="image" label="Browse image" className="w-8" />
                <input aria-label="Image name" defaultValue="tailtext" className={clsx("w-12 pl-[5px] pt-0.5", field)} />
                <button className={clsx("flex-1 pt-0.5", tool)}>F</button>
                <Tool icon="folder" label="Open image" />
                <Tool icon="cross" label="Unlink image" />
              </Group>
            </Row>
            <Row className="mt-0.5">
              <Select value="Color" className="flex-1" />
            </Row>
            <Row className="mt-0.5">
              <Select value="Flat" className="flex-1" />
            </Row>
            <Row className="mt-0.5">
              <Select value="Single Image" className="flex-1" />
            </Row>
            <div className="relative mb-2 mt-[7px]">
              <Icon name="expand" className="absolute left-0 top-0.5 size-4" />
              <Row label="Vector:" indent>
                <LinkButton value="Mapping" />
              </Row>
            </div>
          </Panel>
          <Panel title="Settings" open>
            <p className="mt-2 pl-2.5 pt-0.5 leading-5">Viewport Color:</p>
            <div className="flex gap-3 pl-2.5 pr-1">
              <button aria-label="Viewport color" className="h-5 flex-1 rounded border border-[#252525] bg-[#e7e7e7]" />
              <button aria-label="Alpha" className="h-5 flex-1 rounded-full border border-[#252525] bg-[#a0a0a0]" />
            </div>
          </Panel>
        </div>
        <div className="w-[18px] shrink-0 pb-1 pt-[5px]">
          <div className="h-full w-3.5 rounded-full bg-[#585858]">
            <div className="h-[87%] rounded-full border border-[#4a4a4a] bg-linear-to-r from-[#8c8c8c] to-[#7a7a7a]" />
          </div>
        </div>
      </div>
      <Grip className="right-0 top-0" />
      <Grip className="bottom-0 left-0 rotate-180" />
    </section>
  );
}

function Gradients() {
  return (
    <svg className="absolute size-0" aria-hidden="true">
      <defs>
        <radialGradient id="ball" cx=".35" cy=".3">
          <stop offset="0" stopColor="#fff" />
          <stop offset="1" stopColor="#a8a8a8" />
        </radialGradient>
        <radialGradient id="rose" cx=".35" cy=".3">
          <stop offset="0" stopColor="#f4e6e2" />
          <stop offset="1" stopColor="#a86c60" />
        </radialGradient>
        <radialGradient id="dark" cx=".35" cy=".35">
          <stop offset="0" stopColor="#aaa" />
          <stop offset=".6" stopColor="#333" />
          <stop offset="1" stopColor="#555" />
        </radialGradient>
        <radialGradient id="globe" cx=".35" cy=".3">
          <stop offset="0" stopColor="#d8ecff" />
          <stop offset="1" stopColor="#4a80c4" />
        </radialGradient>
        <linearGradient id="blue">
          <stop offset="0" stopColor="#b8d4fa" />
          <stop offset="1" stopColor="#3c70c0" />
        </linearGradient>
        <linearGradient id="link" x1="0" y1="0" x2="0" y2="1">
          <stop offset="0" stopColor="#ffffff" />
          <stop offset="1" stopColor="#8c8c8c" />
        </linearGradient>
      </defs>
    </svg>
  );
}

export default function App() {
  return (
    <div className="flex h-screen w-full flex-col gap-px overflow-hidden bg-black font-['DejaVu_Sans',sans-serif] text-[10px] text-black">
      <Gradients />
      <TopBar />
      <main className="grid min-h-0 flex-1 grid-cols-[minmax(0,1fr)_258px] gap-px">
        <div className="flex min-h-0 flex-col gap-px">
          <NodeEditor />
          <Viewport />
        </div>
        <aside className="flex min-h-0 flex-col gap-px">
          <Outliner />
          <Properties />
        </aside>
      </main>
    </div>
  );
}
